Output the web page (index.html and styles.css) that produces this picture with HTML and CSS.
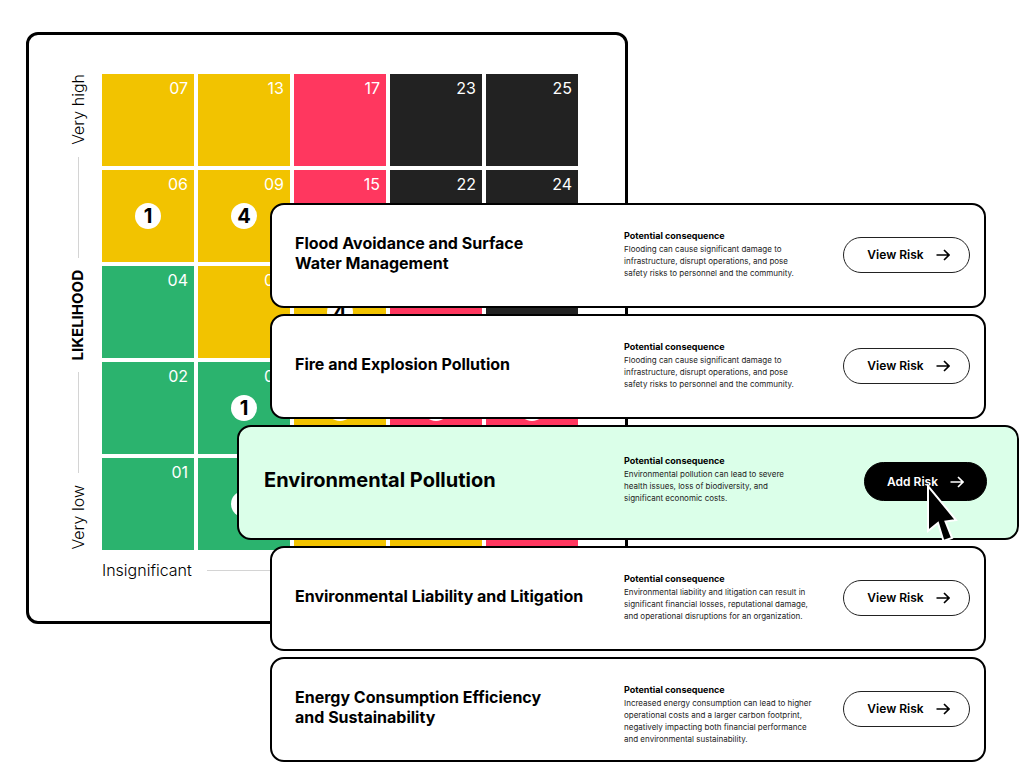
FILE: index.html
```html
<!DOCTYPE html>
<html lang="en">
  <head>
    <meta charset="UTF-8" />
    <meta name="viewport" content="width=device-width, initial-scale=1.0" />
    <title>Risk Matrix</title>
    <link rel="stylesheet" href="styles.css">
  </head>

  <body>
    <main class="scene">
      <section class="panel">
        <div class="axis-y">
          <span class="axis-label">Very high</span>
          <span class="axis-line"></span>
          <span class="axis-title">LIKELIHOOD</span>
          <span class="axis-line"></span>
          <span class="axis-label">Very low</span>
        </div>

        <div class="matrix">
          <div class="cell yellow">07</div>
          <div class="cell yellow">13</div>
          <div class="cell red">17</div>
          <div class="cell dark">23</div>
          <div class="cell dark">25</div>

          <div class="cell yellow">06<span class="count">1</span></div>
          <div class="cell yellow">09<span class="count">4</span></div>
          <div class="cell red">15</div>
          <div class="cell dark">22</div>
          <div class="cell dark">24</div>

          <div class="cell green">04</div>
          <div class="cell yellow">08</div>
          <div class="cell yellow"><span class="count">4</span></div>
          <div class="cell red"></div>
          <div class="cell dark"></div>

          <div class="cell green">02</div>
          <div class="cell green">03<span class="count">1</span></div>
          <div class="cell yellow"><span class="count"></span></div>
          <div class="cell red"><span class="count"></span></div>
          <div class="cell red"><span class="count"></span></div>

          <div class="cell green">01</div>
          <div class="cell green"><span class="count"></span></div>
          <div class="cell yellow"></div>
          <div class="cell yellow"></div>
          <div class="cell red"></div>
        </div>

        <div class="axis-x">
          <span class="axis-label">Insignificant</span>
          <span class="axis-line"></span>
        </div>
      </section>

      <section class="cards">
        <article class="card">
          <h2>Flood Avoidance and Surface<br>Water Management</h2>
          <div class="info">
            <h3>Potential consequence</h3>
            <p>Flooding can cause significant damage to<br>infrastructure, disrupt operations, and pose<br>safety risks to personnel and the community.</p>
          </div>
          <button class="btn" type="button">
            View Risk
            <svg class="arrow" viewBox="0 0 14 12"><path d="M0.5 6H13M8 1l5 5-5 5" /></svg>
          </button>
        </article>

        <article class="card">
          <h2>Fire and Explosion Pollution</h2>
          <div class="info">
            <h3>Potential consequence</h3>
            <p>Flooding can cause significant damage to<br>infrastructure, disrupt operations, and pose<br>safety risks to personnel and the community.</p>
          </div>
          <button class="btn" type="button">
            View Risk
            <svg class="arrow" viewBox="0 0 14 12"><path d="M0.5 6H13M8 1l5 5-5 5" /></svg>
          </button>
        </article>

        <article class="card active">
          <h2>Environmental Pollution</h2>
          <div class="info">
            <h3>Potential consequence</h3>
            <p>Environmental pollution can lead to severe<br>health issues, loss of biodiversity, and<br>significant economic costs.</p>
          </div>
          <button class="btn btn-dark" type="button">
            Add Risk
            <svg class="arrow" viewBox="0 0 14 12"><path d="M0.5 6H13M8 1l5 5-5 5" /></svg>
            <svg class="cursor" viewBox="0 0 36 62">
              <path d="M4 3V48L14 40L19.500 58L28 55L21.500 38.500L32 37Z" />
            </svg>
          </button>
        </article>

        <article class="card">
          <h2>Environmental Liability and Litigation</h2>
          <div class="info">
            <h3>Potential consequence</h3>
            <p>Environmental liability and litigation can result in<br>significant financial losses, reputational damage,<br>and operational disruptions for an organization.</p>
          </div>
          <button class="btn" type="button">
            View Risk
            <svg class="arrow" viewBox="0 0 14 12"><path d="M0.5 6H13M8 1l5 5-5 5" /></svg>
          </button>
        </article>

        <article class="card">
          <h2>Energy Consumption Efficiency<br>and Sustainability</h2>
          <div class="info">
            <h3>Potential consequence</h3>
            <p>Increased energy consumption can lead to higher<br>operational costs and a larger carbon footprint,<br>negatively impacting both financial performance<br>and environmental sustainability.</p>
          </div>
          <button class="btn" type="button">
            View Risk
            <svg class="arrow" viewBox="0 0 14 12"><path d="M0.5 6H13M8 1l5 5-5 5" /></svg>
          </button>
        </article>
      </section>
    </main>
  </body>
</html>
```
FILE: styles.css
```css
* {
  margin: 0;
  padding: 0;
  box-sizing: border-box;
}

body {
  font-family: "Inter", "Liberation Sans", sans-serif;
  background: #fff;
  color: #000;
}

/* matrix and cards share one grid cell, so the cards lie over the matrix */
.scene {
  display: grid;
  align-items: start;
  padding: 32px 38px 18px 26px;
}

.panel,
.cards {
  grid-area: 1 / 1;
}

.panel {
  display: grid;
  grid-template-columns: 24px 1fr;
  column-gap: 12px;
  margin-right: 358px;
  padding: 39px 47px 40px 37px;
  border: 3px solid #000;
  border-radius: 12px;
}

.matrix {
  display: grid;
  grid-template-columns: repeat(5, 1fr);
  gap: 4px;
}

.cell {
  position: relative;
  aspect-ratio: 1;
  padding: 4px 6px;
  color: #fff;
  font-size: 16px;
  line-height: 20px;
  text-align: right;
}

.yellow {
  background: #f2c300;
}

.red {
  background: #ff375f;
}

.dark {
  background: #222;
}

.green {
  background: #2bb36e;
}

/* badge over the middle of a cell */
.count {
  position: absolute;
  inset: 0;
  width: 26px;
  height: 26px;
  margin: auto;
  border-radius: 50%;
  background: #fff;
  color: #000;
  font-size: 20px;
  font-weight: 700;
  line-height: 26px;
  text-align: center;
}

.axis-y {
  display: flex;
  flex-direction: column;
  align-items: center;
  gap: 12px;
  line-height: 24px;
}

.axis-y .axis-label,
.axis-y .axis-title {
  writing-mode: vertical-rl;
  transform: rotate(180deg);
}

.axis-label {
  font-size: 16px;
  font-weight: 300;
}

.axis-title {
  font-size: 15px;
  font-weight: 700;
}

.axis-line {
  flex: 1;
  background: #d4d4d4;
}

.axis-y .axis-line {
  width: 1px;
}

.axis-x {
  grid-column: 2;
  display: flex;
  align-items: center;
  gap: 15px;
  padding-top: 10px;
  line-height: 21px;
}

.axis-x .axis-line {
  height: 1px;
}

.cards {
  display: flex;
  flex-direction: column;
  gap: 6px;
  margin-top: 171px;
  margin-left: 244px;
  z-index: 1;
}

.card {
  display: grid;
  grid-template-columns: 1fr 219px 127px;
  align-items: center;
  min-height: 105px;
  padding: 0 14px 2px 23px;
  border: 2px solid #000;
  border-radius: 14px;
  background: #fff;
}

.card h2 {
  padding-bottom: 4px;
  font-size: 16px;
  font-weight: 700;
  font-optical-sizing: none;
  line-height: 20px;
}

.info {
  align-self: start;
  padding-top: 24px;
}

.info h3 {
  font-size: 9px;
  font-weight: 700;
  line-height: 14px;
}

.info p {
  color: #222;
  font-size: 8px;
  line-height: 12px;
}

.card.active {
  grid-template-columns: 1fr 240px 123px;
  min-height: 115px;
  margin: 0 -33px;
  padding: 0 30px 2px 25px;
  background: #dbffe9;
}

.active h2 {
  font-size: 20px;
  line-height: 24px;
}

.active .info {
  padding-top: 27px;
}

.btn {
  position: relative;
  display: flex;
  justify-content: center;
  align-items: center;
  gap: 12px;
  height: 36px;
  padding-left: 4px;
  border: 1px solid #222;
  border-radius: 20px;
  background: #fff;
  color: #000;
  font-family: inherit;
  font-size: 12px;
  font-weight: 600;
  cursor: pointer;
}

.btn-dark {
  height: 39px;
  padding-left: 0;
  border-color: #000;
  background: #000;
  color: #fff;
}

.arrow {
  width: 14px;
  height: 12px;
  fill: none;
  stroke: currentColor;
  stroke-width: 1.6;
}

.cursor {
  position: absolute;
  top: 20px;
  left: 59px;
  width: 36px;
  height: 62px;
  fill: #000;
  stroke: #fff;
  stroke-width: 2;
}
```
